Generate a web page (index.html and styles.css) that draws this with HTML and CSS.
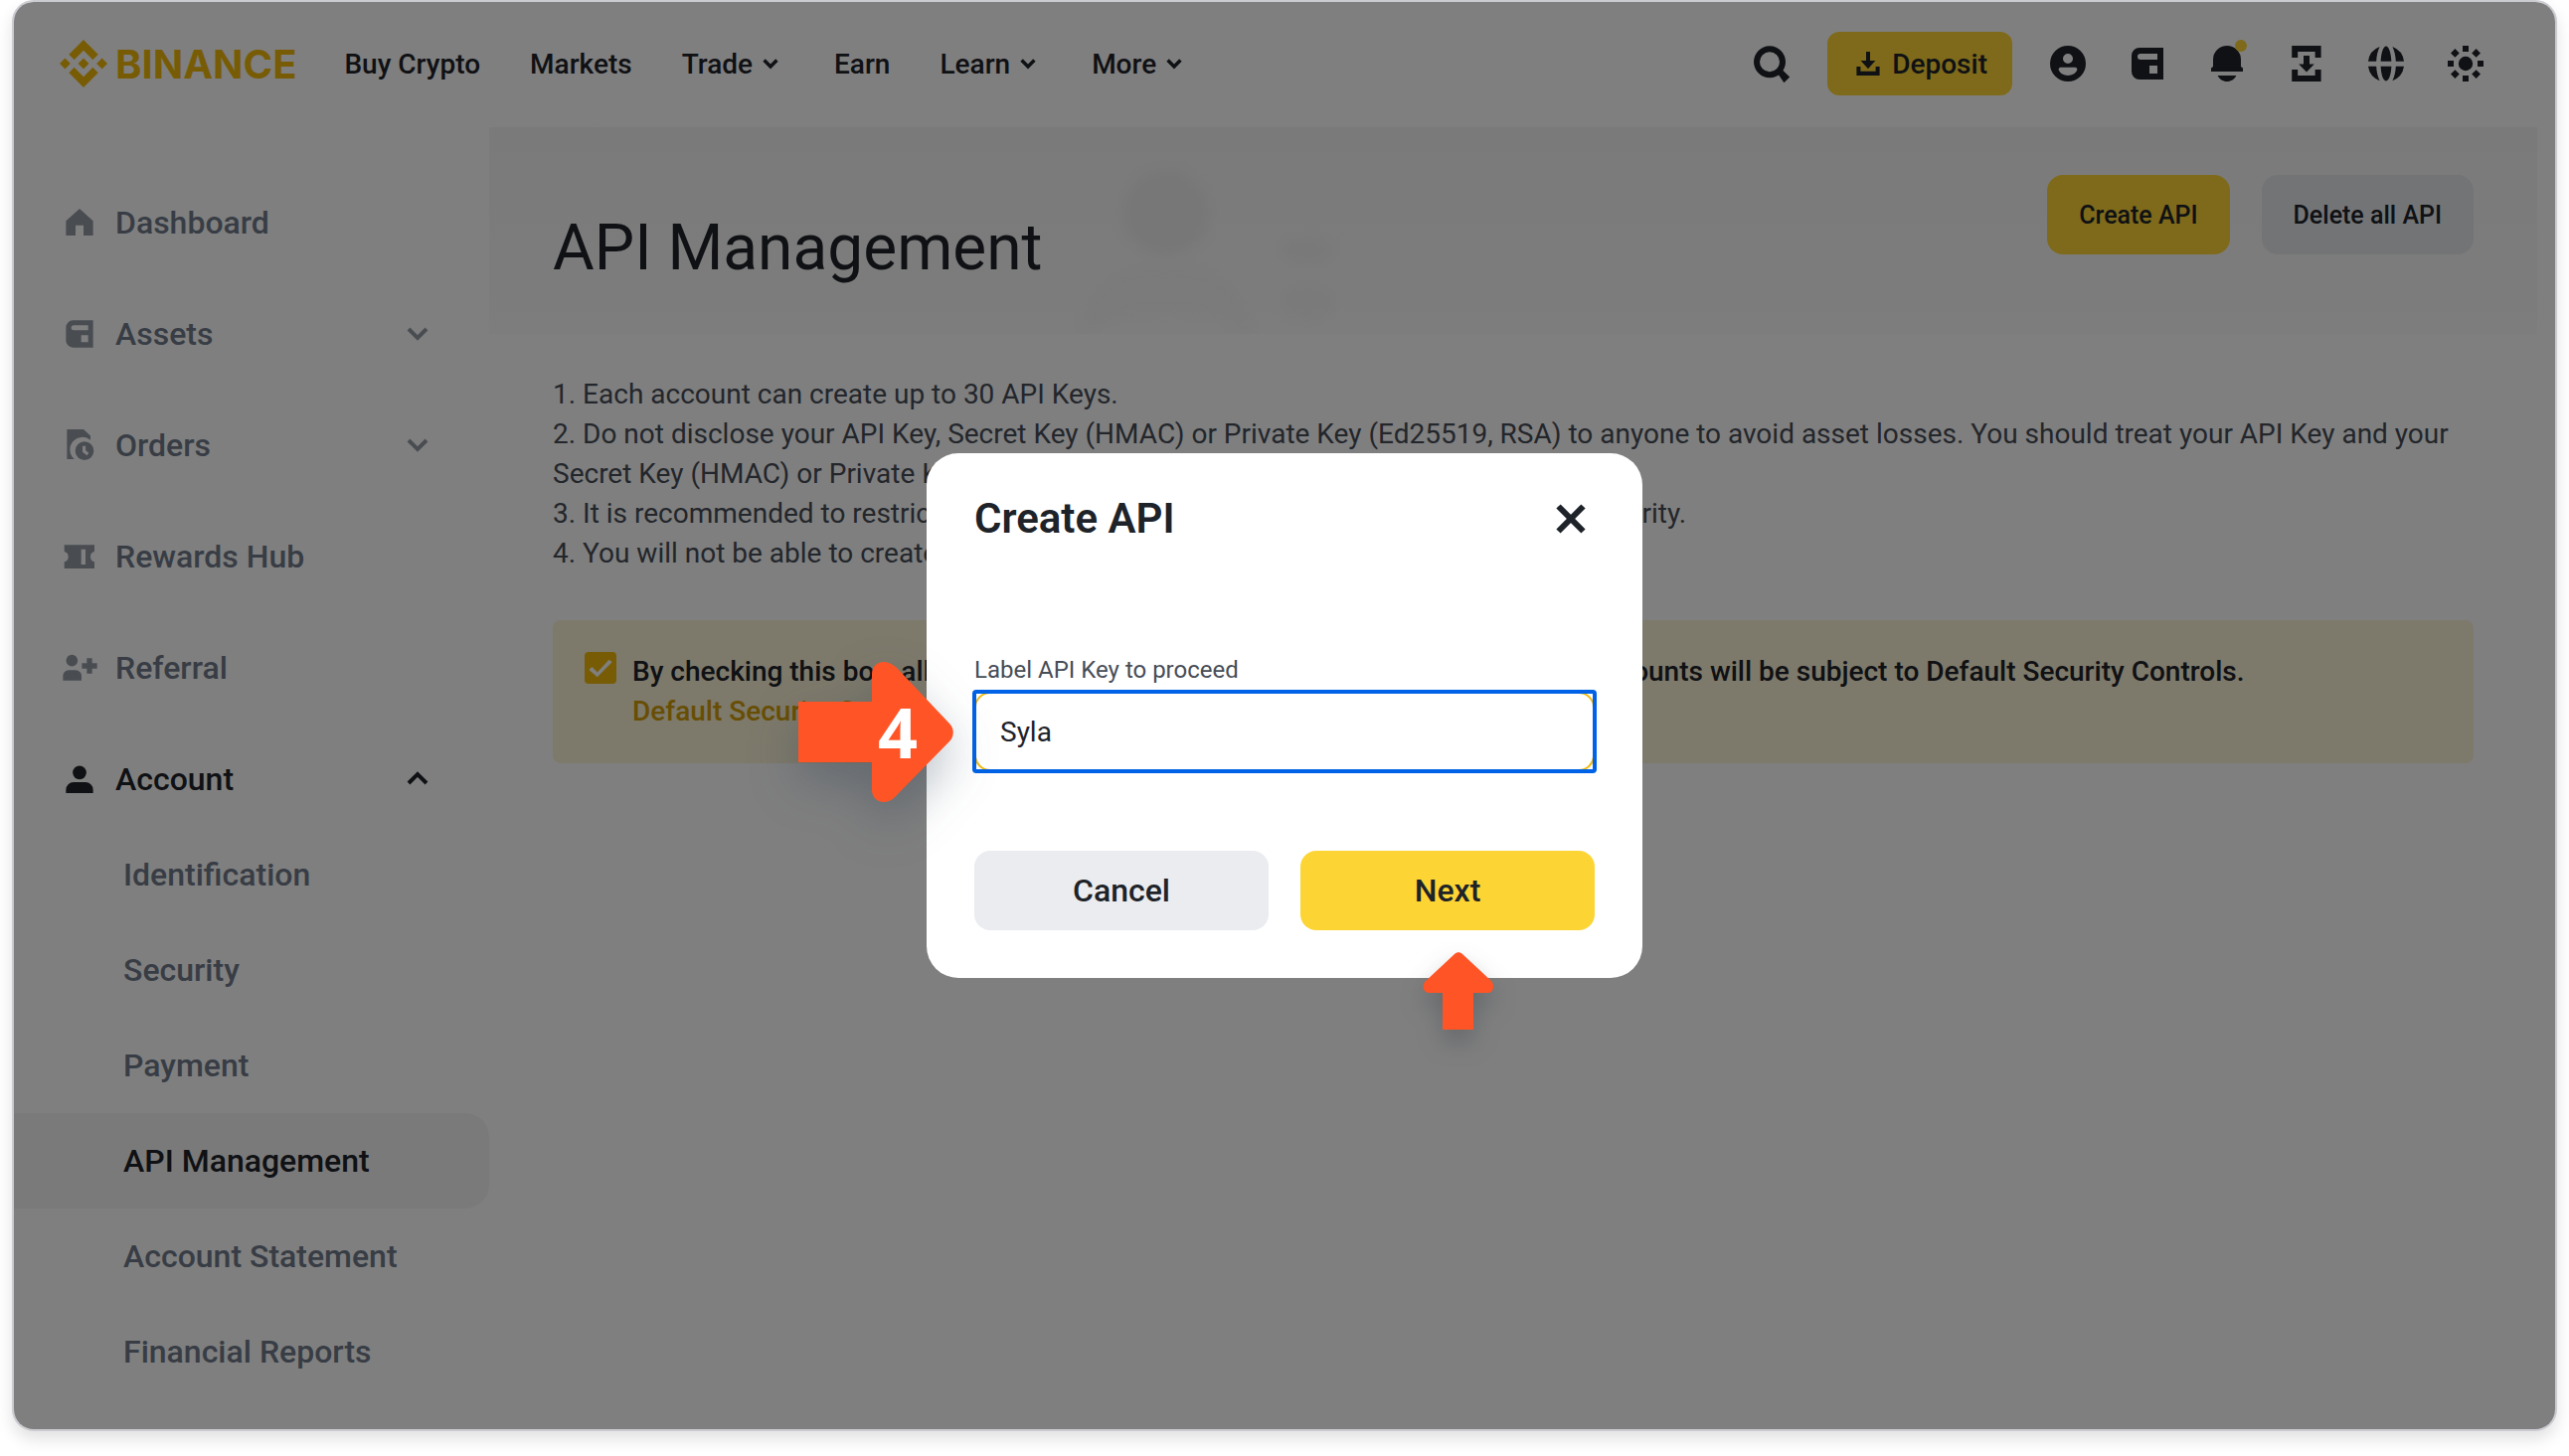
FILE: index.html
```html
<!DOCTYPE html>
<html lang="en">
<head>
    <meta charset="UTF-8">
    <meta name="viewport" content="width=device-width, initial-scale=1.0">
    <title>API Management | Binance</title>
    <link rel="stylesheet" href="styles.css">
</head>
<body>
  <div class="window">
    <header class="topbar">
      <a class="logo" href="#">
        <svg viewBox="0 0 126.61 126.61" aria-hidden="true">
          <path d="M38.73 53.2L63.3 28.63l24.58 24.58 14.29-14.3L63.3 0 24.43 38.9z"/>
          <path d="M0 63.31l14.3-14.3 14.3 14.3-14.3 14.3z"/>
          <path d="M38.73 73.41L63.3 98l24.58-24.57 14.3 14.29L63.3 126.61 24.43 87.73z"/>
          <path d="M98 63.31l14.3-14.3 14.3 14.3-14.3 14.3z"/>
          <path d="M77.83 63.3L63.3 48.78 48.78 63.3 63.3 77.83z"/>
        </svg>
        <span>BINANCE</span>
      </a>

      <nav class="main-nav">
        <a href="#">Buy Crypto</a>
        <a href="#">Markets</a>
        <button type="button">Trade <svg class="caret" viewBox="0 0 24 24"><path d="M6.5 9l5.5 5.5L17.5 9"/></svg></button>
        <a href="#">Earn</a>
        <button type="button">Learn <svg class="caret" viewBox="0 0 24 24"><path d="M6.5 9l5.5 5.5L17.5 9"/></svg></button>
        <button type="button">More <svg class="caret" viewBox="0 0 24 24"><path d="M6.5 9l5.5 5.5L17.5 9"/></svg></button>
      </nav>

      <div class="tools">
        <button type="button" class="tool" aria-label="Search">
          <svg viewBox="0 0 24 24"><circle cx="11" cy="11.1" r="6.5" fill="none" stroke="currentColor" stroke-width="3"/><path d="M15.3 17.4l2.2-2.2 3.6 3.5-2.9 2.9z"/></svg>
        </button>
        <button type="button" class="deposit">
          <svg viewBox="0 0 24 24"><path d="M10.5 3h3v6.7h4L12 15.9 6.5 9.7h4z"/><path d="M3.3 14.2h3v3.7h11.4v-3.7h3V21H3.3z"/></svg>
          Deposit
        </button>
        <button type="button" class="tool" aria-label="Profile">
          <svg viewBox="0 0 24 24"><path fill-rule="evenodd" d="M12 3a9 9 0 1 0 0 18 9 9 0 0 0 0-18zm0 4a2.5 2.5 0 1 1 0 5 2.5 2.5 0 0 1 0-5zm-3.6 6.9h7.2c.8 0 1.3.7 1 1.4C15.900 17 14.100 18 12 18s-3.900-1-4.600-2.700c-.3-.7.2-1.400 1-1.400z"/></svg>
        </button>
        <button type="button" class="tool" aria-label="Wallet">
          <svg viewBox="0 0 24 24"><path fill-rule="evenodd" d="M8 4h12v16H8a4 4 0 0 1-4-4V8a4 4 0 0 1 4-4zm.5 3a1.5 1.5 0 0 0 0 3H17V7zM13 13v4h4v-4z"/></svg>
        </button>
        <button type="button" class="tool" aria-label="Notifications">
          <svg viewBox="0 0 24 24"><path d="M5 10a7 7 0 0 1 14 0v3.5l1 .7V16H4v-1.8l1-.7z"/><path d="M7.3 18h9.4c-.9 1.9-2.6 3-4.7 3s-3.800-1.100-4.700-3z"/></svg>
          <span class="dot"></span>
        </button>
        <button type="button" class="tool" aria-label="Download app">
          <svg viewBox="0 0 24 24"><path d="M4.6 3h14.7v6h-3V6H7.6v3h-3zM4.6 15h3v3h8.7v-3h3v6H4.6z"/><path d="M10.5 8h3v4.2h2.4L12 16.2l-3.900-4h2.400z"/></svg>
        </button>
        <button type="button" class="tool" aria-label="Language">
          <svg viewBox="0 0 24 24"><path d="M8.8 3.5A9 9 0 0 0 3 10.9h4.1c.1-2.8.7-5.400 1.700-7.400zM15.200 3.500A9 9 0 0 1 21 10.900h-4.100c-.1-2.800-.7-5.400-1.700-7.400zM8.800 20.600A9 9 0 0 1 3 13.400h4.100c.1 2.800.7 5.200 1.700 7.200zM15.200 20.600A9 9 0 0 0 21 13.400h-4.100c-.1 2.800-.7 5.200-1.700 7.200z"/><path d="M12 3.300c1.400 0 2.500 3.400 2.700 7.600H9.300c.2-4.200 1.300-7.600 2.700-7.600zM12 20.700c-1.400 0-2.500-3.100-2.700-7.300h5.400c-.2 4.200-1.300 7.300-2.700 7.300z"/></svg>
        </button>
        <button type="button" class="tool" aria-label="Theme">
          <svg viewBox="0 0 24 24"><circle cx="12" cy="12" r="3.6"/><path d="M10.5 3h3v3h-3zM10.5 18h3v3h-3zM3 10.5h3v3H3zM18 10.5h3v3h-3zM6.7 4.500l2.200 2.200-2.200 2.200-2.200-2.200zM17.300 4.500l2.200 2.200-2.200 2.200-2.200-2.200zM6.700 15.100l2.200 2.200-2.200 2.200-2.200-2.200zM17.300 15.100l2.200 2.200-2.200 2.200-2.200-2.200z"/></svg>
        </button>
      </div>
    </header>

    <div class="layout">
      <aside class="sidebar">
        <ul class="menu">
          <li><a href="#">
            <svg class="menu-icon" viewBox="0 0 24 24"><path d="M12 3.6l8.2 7.4v8.800h-5.800v-6.200H9.600v6.200H3.800V11z"/></svg>
            Dashboard</a></li>
          <li><a href="#">
            <svg class="menu-icon" viewBox="0 0 24 24"><path fill-rule="evenodd" d="M8 3.800h12.200v16.400H8a4.200 4.200 0 0 1-4.200-4.200V8A4.200 4.200 0 0 1 8 3.800zm.5 3a1.500 1.500 0 0 0 0 3h8.700v-3zM13 12.800V17h4.200v-4.200z"/></svg>
            Assets
            <svg class="chevron" viewBox="0 0 24 24"><path d="M3 7l9 9 9-9"/></svg></a></li>
          <li><a href="#">
            <svg class="menu-icon" viewBox="0 0 24 24"><path d="M4.400 2.400h10l4.200 3.900v2.600A7.400 7.400 0 0 0 8.900 20.400H4.400z"/><path fill-rule="evenodd" d="M15 9.800a5.600 5.600 0 1 0 0 11.200 5.600 5.600 0 0 0 0-11.200zm-1.200 2.600h1.900v2.700l1.900 1.500-1.200 1.500-2.600-2.100z"/></svg>
            Orders
            <svg class="chevron" viewBox="0 0 24 24"><path d="M3 7l9 9 9-9"/></svg></a></li>
          <li><a href="#">
            <svg class="menu-icon" viewBox="0 0 24 24"><path fill-rule="evenodd" d="M2.800 5H21v4a3.200 3.200 0 0 0 0 6.200v4H2.800v-4a3.200 3.200 0 0 0 0-6.200zM13 7.600v9.200h2.600V7.600z"/></svg>
            Rewards Hub</a></li>
          <li><a href="#">
            <svg class="menu-icon" viewBox="0 0 24 24"><circle cx="7.4" cy="7.6" r="3.5"/><path d="M2 19.600v-2.800a3.400 3.400 0 0 1 3.400-3.400h4.400a3.400 3.400 0 0 1 3.400 3.400v2.800zM16.400 6.200h3.200v3h3v3.200h-3v3h-3.200v-3h-3V9.200h3z"/></svg>
            Referral</a></li>
          <li><a class="open" href="#">
            <svg class="menu-icon" viewBox="0 0 24 24"><circle cx="12" cy="8" r="4.1"/><path d="M3.800 20.400v-2a4.600 4.600 0 0 1 4.600-4.600h7.200a4.600 4.600 0 0 1 4.600 4.600v2z"/></svg>
            Account
            <svg class="chevron" viewBox="0 0 24 24"><path d="M3 16l9-9 9 9"/></svg></a></li>
        </ul>
        <ul class="submenu">
          <li><a href="#">Identification</a></li>
          <li><a href="#">Security</a></li>
          <li><a href="#">Payment</a></li>
          <li><a class="active" href="#">API Management</a></li>
          <li><a href="#">Account Statement</a></li>
          <li><a href="#">Financial Reports</a></li>
        </ul>
      </aside>

      <main class="content">
        <section class="banner">
          <svg class="banner-art" viewBox="0 0 300 208" aria-hidden="true">
            <circle cx="113" cy="86" r="43"/>
            <path d="M28 208c0-40 30-68 85-68s85 28 85 68l-30-16c-30-10-80-10-110 0z" opacity=".3"/>
            <ellipse cx="255" cy="124" rx="26" ry="12" opacity=".6"/>
            <ellipse cx="255" cy="176" rx="28" ry="16" opacity=".4"/>
          </svg>
          <h1>API Management</h1>
          <div class="banner-actions">
            <button type="button" class="btn-small primary">Create API</button>
            <button type="button" class="btn-small">Delete all API</button>
          </div>
        </section>

        <ol class="rules">
          <li>Each account can create up to 30 API Keys.</li>
          <li>Do not disclose your API Key, Secret Key (HMAC) or Private Key (Ed25519, RSA) to anyone to avoid asset losses. You should treat your API Key and your Secret Key (HMAC) or Private Key (Ed25519, RSA) as your passwords.</li>
          <li>It is recommended to restrict access to trusted IPs only to increase your account security.</li>
          <li>You will not be able to create an API Key if KYC is not completed.</li>
        </ol>

        <div class="notice">
          <input type="checkbox" id="defaultControls" checked>
          <div class="notice-text">
            <label for="defaultControls">By checking this box, all existing API Key(s) on your master account and sub-accounts will be subject to Default Security Controls.</label>
            <a href="#">Default Security Controls Details</a>
          </div>
        </div>
      </main>
    </div>

    <div class="overlay">
      <form class="modal" role="dialog" aria-labelledby="modalTitle">
        <div class="modal-head">
          <h2 id="modalTitle">Create API</h2>
          <button type="button" class="close" aria-label="Close">
            <svg viewBox="0 0 32 32"><path d="M3.5 3.5l25 25M28.5 3.5l-25 25"/></svg>
          </button>
        </div>
        <label class="field-label" for="apiLabel">Label API Key to proceed</label>
        <div class="field">
          <input type="text" id="apiLabel" value="Syla">
        </div>
        <div class="modal-actions">
          <button type="button" class="btn">Cancel</button>
          <button type="submit" class="btn primary">Next</button>
        </div>

        <!-- tutorial step markers -->
        <div class="step-arrow">
          <svg viewBox="0 0 156 141" aria-hidden="true"><path d="M0 40H74V12C74 4 80 0 86 0c5 0 10 3 14 7l52 55c5 5 5 13 0 18l-52 53c-4 5-9 8-14 8-6 0-12-4-12-12v-28H0z"/></svg>
          <span>4</span>
        </div>
        <svg class="pointer-arrow" viewBox="0 0 72 78" aria-hidden="true"><path d="M20 78V41H7c-6 0-8-6-5-11L32 2c2.500-2.500 5.500-2.500 8 0l29 27c4 5 2 12-4 12H51v37z"/></svg>
      </form>
    </div>
  </div>
</body>
</html>
```
FILE: styles.css
```css
* {
  box-sizing: border-box;
}
body {
  margin: 0;
  padding: 0 12px 24px;
  font-family: Roboto, Arial, sans-serif;
  font-size: 28px;
  color: #1e2329;
  background: white;
}
a {
  color: inherit;
  text-decoration: none;
}
button {
  font: inherit;
  color: inherit;
  background: none;
  border: none;
  padding: 0;
  cursor: pointer;
}
svg {
  display: block;
  fill: currentColor;
}
h1, h2, ul, ol {
  margin: 0;
  padding: 0;
}
ul {
  list-style: none;
}

.window {
  position: relative;
  overflow: hidden;
  background: white;
  border: 2px solid #cbcbd2;
  border-radius: 22px;
  box-shadow: 0 8px 16px rgba(0, 0, 0, 0.12);
}

/* top bar */
.topbar {
  display: flex;
  align-items: center;
  height: 124px;
  padding: 0 66px 0 46px;
  font-weight: 500;
}
.logo {
  display: flex;
  align-items: center;
  gap: 8px;
  color: #f0b90b;
  font: 700 40px Inter, sans-serif;
}
.logo svg {
  width: 48px;
  height: 48px;
}
.main-nav {
  display: flex;
  align-items: center;
  gap: 50px;
  margin-left: 48px;
}
.main-nav button {
  display: flex;
  align-items: center;
  gap: 4px;
}
.caret {
  width: 28px;
  height: 28px;
  fill: none;
  stroke: currentColor;
  stroke-width: 3;
}
.tools {
  display: flex;
  align-items: center;
  gap: 32px;
  margin-left: auto;
}
.tool {
  position: relative;
}
.tool svg {
  width: 48px;
  height: 48px;
}
.dot {
  position: absolute;
  top: 0;
  right: 4px;
  width: 12px;
  height: 12px;
  border-radius: 50%;
  background: #fcd535;
}
.deposit {
  display: flex;
  align-items: center;
  gap: 8px;
  height: 64px;
  padding: 0 25px;
  border-radius: 12px;
  background: #fcd535;
}
.deposit svg {
  width: 32px;
  height: 32px;
}

/* sidebar */
.layout {
  display: flex;
  padding: 2px 18px 0 0;
}
.sidebar {
  flex: none;
  width: 478px;
  padding: 48px 0 30px;
  font-size: 32px;
  font-weight: 500;
  color: #707a8a;
}
.menu {
  display: flex;
  flex-direction: column;
  gap: 16px;
}
.menu a {
  display: flex;
  align-items: center;
  gap: 16px;
  height: 96px;
  padding: 0 60px 0 46px;
}
.menu-icon {
  width: 40px;
  height: 40px;
  color: #929aa5;
}
.chevron {
  width: 24px;
  height: 24px;
  margin-left: auto;
  fill: none;
  stroke: #929aa5;
  stroke-width: 4;
}
.submenu a {
  display: flex;
  align-items: center;
  height: 96px;
  padding-left: 110px;
}
.menu .open, .menu .open .menu-icon, .submenu .active { color: #1e2329; }
.menu .open .chevron { stroke: #1e2329; }
.submenu .active {
  background: #f5f5f5;
  border-radius: 0 24px 24px 0;
}

/* content */
.content {
  flex: 1;
  min-width: 0;
}
.banner {
  position: relative;
  display: flex;
  justify-content: space-between;
  align-items: flex-start;
  padding: 48px 64px;
  background: linear-gradient(#f5f5f5, #fafafa);
}
.banner-art {
  position: absolute;
  top: 0;
  left: 568px;
  width: 300px;
  height: 208px;
  color: #eeeeee;
  filter: blur(6px);
}
.banner h1 {
  position: relative;
  margin-top: 36px;
  font-size: 64px;
  line-height: 76px;
  font-weight: 400;
}
.banner-actions {
  display: flex;
  gap: 32px;
}
.btn-small {
  height: 80px;
  padding: 0 32px;
  border-radius: 16px;
  background: #e6e8ec;
  font-size: 25px;
  font-weight: 500;
}
.primary {
  background: #fcd535;
}
.rules {
  margin: 41px 64px 0;
  list-style-position: inside;
  line-height: 40px;
  color: #474d57;
}
.notice {
  display: flex;
  gap: 16px;
  margin: 47px 64px 0;
  padding: 32px;
  border-radius: 8px;
  background: #faf3d7;
  line-height: 40px;
  font-weight: 500;
}
.notice input {
  flex: none;
  appearance: none;
  width: 32px;
  height: 32px;
  margin: 0;
  border-radius: 4px;
  background: #f0b90b;
}
.notice input:checked::before {
  content: "";
  display: block;
  height: 100%;
  background: white;
  clip-path: polygon(14% 56%, 23% 47%, 40% 64%, 77% 24%, 86% 32%, 40% 79%);
}
.notice label, .notice a {
  display: block;
}
.notice a {
  color: #d09c06;
}

/* modal */
.overlay {
  position: absolute;
  inset: 0;
  display: flex;
  align-items: center;
  justify-content: center;
  background: rgba(0, 0, 0, 0.5);
}
.modal {
  position: relative;
  width: 720px;
  padding: 42px 48px 48px;
  border-radius: 32px;
  background: white;
}
.modal-head {
  display: flex;
  align-items: center;
  justify-content: space-between;
  margin-bottom: 112px;
}
.modal-head h2 {
  font-size: 42px;
  line-height: 48px;
  font-weight: 600;
}
.close {
  margin-right: 8px;
}
.close svg {
  width: 32px;
  height: 32px;
  stroke: currentColor;
  stroke-width: 6;
}
.field-label {
  display: block;
  margin-bottom: 6px;
  font-size: 24px;
  line-height: 32px;
  color: #474d57;
}
.field {
  outline: 4px solid #0062e6;
  outline-offset: -2px;
  border-radius: 2px;
}
.field input {
  display: block;
  width: 100%;
  height: 80px;
  padding: 0 24px;
  border: 2px solid #f0b90b;
  border-radius: 16px;
  outline: none;
  font: inherit;
  color: inherit;
}
.modal-actions {
  display: flex;
  gap: 32px;
  margin-top: 80px;
}
.btn {
  flex: 1;
  height: 80px;
  border-radius: 16px;
  background: #eaecef;
  font-size: 32px;
  font-weight: 500;
}
.btn.primary {
  background: #fcd535;
}

/* step markers on top of the modal */
.step-arrow {
  position: absolute;
  top: 210px;
  left: -129px;
  width: 156px;
  height: 141px;
  color: #ff5526;
  filter: drop-shadow(0 20px 24px rgba(40, 60, 80, 0.3));
}
.step-arrow span {
  position: absolute;
  inset: 0 16px 0 60px;
  color: white;
  font: 700 70px/141px "Open Sans", sans-serif;
  text-align: center;
}
.pointer-arrow {
  position: absolute;
  top: 502px;
  right: 149px;
  width: 72px;
  height: 78px;
  color: #ff5526;
  filter: drop-shadow(0 12px 12px rgba(40, 50, 60, 0.3));
}
```
